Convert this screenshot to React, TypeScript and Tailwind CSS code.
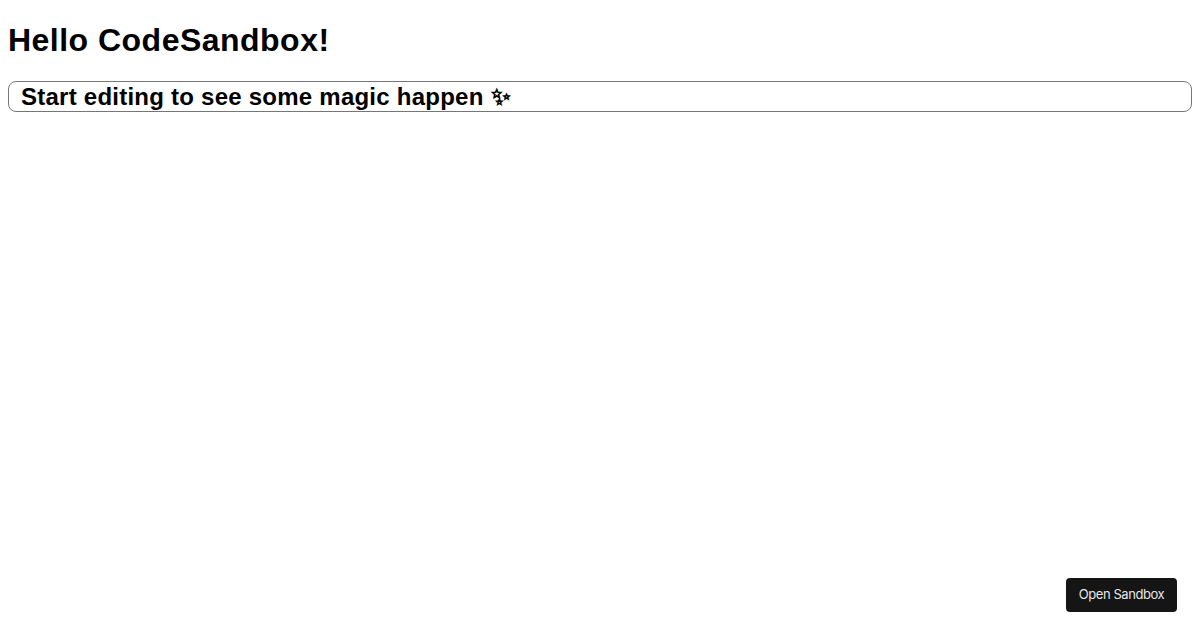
export default function App() {
  return (
    <div className="min-h-[630px] bg-white p-2 font-['Liberation_Sans',Arial,sans-serif] text-black">
      <h1 className="mt-[14px] mb-[22px] text-[32px] leading-[37px] font-bold tracking-[0.48px]">Hello CodeSandbox!</h1>
      <h2 className="h-[31px] rounded-lg border border-[#767676] px-3 text-2xl leading-[30px] font-bold tracking-[0.24px]">
        Start editing to see some magic happen <span className="ml-px font-['DejaVu_Sans',sans-serif]">{"\u2728\uFE0E"}</span>
      </h2>
      <a
        href="#"
        className="fixed right-[23px] bottom-[18px] flex h-[34px] w-[111px] items-center justify-center rounded bg-[#151515] font-['Inter',sans-serif] text-[13px] tracking-[-0.45px] text-[#e6e6e6]"
      >
        Open Sandbox
      </a>
    </div>
  );
}
